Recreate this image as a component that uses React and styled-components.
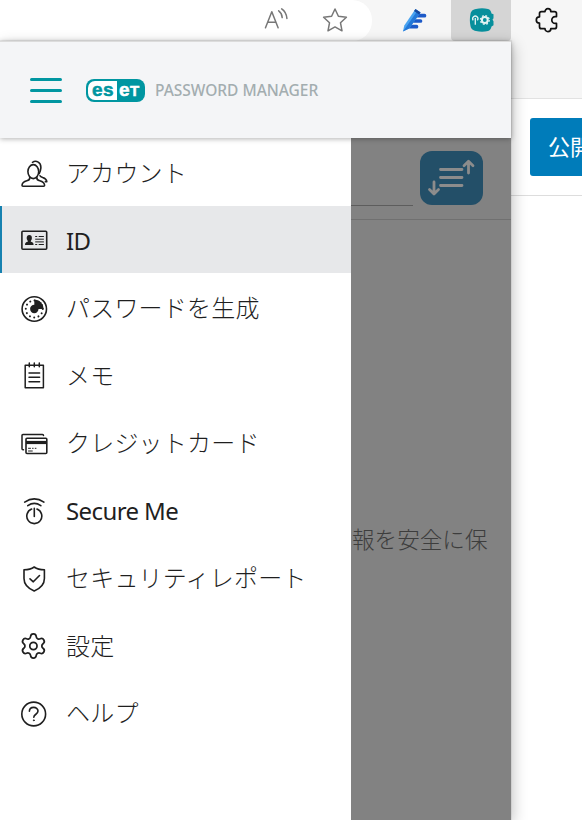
import React from 'react'
import styled, { createGlobalStyle } from 'styled-components'
import { Settings } from 'lucide-react'

const GlobalStyle = createGlobalStyle`
  * {
    box-sizing: border-box;
  }
  body {
    margin: 0;
    overflow: hidden;
    background: #fff;
    font-family: 'Noto Sans', 'Noto Sans CJK JP', sans-serif;
    color: #1f1f1f;
  }
  svg {
    display: block;
    flex-shrink: 0;
  }
`

const Screen = styled.div`
  position: relative;
  width: 582px;
  height: 820px;
  overflow: hidden;
  background: #fff;
`

const BrowserBar = styled.div`
  display: flex;
  align-items: flex-start;
  height: 99px;
  background: #f6f6f6;
  border-bottom: 1px solid #e2e2e2;
`

const AddressBar = styled.div`
  display: flex;
  align-items: center;
  justify-content: flex-end;
  gap: 33px;
  width: 372px;
  height: 41px;
  padding: 0 24px 2px 0;
  background: #fff;
  border-radius: 0 20px 20px 0;
`

const Extension = styled.div`
  display: flex;
  align-items: center;
  justify-content: center;
  width: ${({ $width }) => $width}px;
  height: 41px;
  padding-bottom: 2px;
  margin-left: ${({ $gap }) => $gap || 0}px;
  border-radius: 0 0 4px 4px;
  background: ${({ $active }) => ($active ? '#d5d5d5' : 'transparent')};
`

const EditorBar = styled.div`
  display: flex;
  justify-content: flex-end;
  height: 97px;
  padding-top: 19px;
  border-bottom: 1px solid #ddd;
`

const PublishButton = styled.button`
  width: 52px;
  height: 58px;
  padding: 0 0 4px 18px;
  border: 0;
  border-radius: 3px 0 0 3px;
  background: #007cba;
  color: #fff;
  font: 22px 'Noto Sans CJK JP', sans-serif;
  text-align: left;
  white-space: nowrap;
  overflow: hidden;
`

const Popup = styled.section`
  position: absolute;
  top: 41px;
  left: 0;
  bottom: 0;
  width: 511px;
  display: flex;
  flex-direction: column;
  background: #828282;
  box-shadow: 0 0 0 1px rgba(0, 0, 0, 0.06), 2px 4px 14px rgba(0, 0, 0, 0.24);
`

const Header = styled.header`
  display: flex;
  align-items: center;
  height: 97px;
  padding-left: 30px;
  background: #f4f5f7;
  border-top: 1px solid #dcdcdc;
  box-shadow: 0 1px 5px rgba(0, 0, 0, 0.3);
  z-index: 1;
`

const Burger = styled.div`
  display: flex;
  flex-direction: column;
  gap: 8px;
  margin-right: 24px;
  span {
    width: 32px;
    height: 3px;
    border-radius: 2px;
    background: #0096a1;
  }
`

const Logo = styled.div`
  display: flex;
  width: 59px;
  height: 23px;
  padding: 2px;
  margin-right: 10px;
  border-radius: 8px;
  background: #0096a1;
  font: bold 19px/18px 'Liberation Sans', sans-serif;
  -webkit-text-stroke: 0.5px;
`

const LogoHalf = styled.span`
  width: ${({ $light }) => ($light ? 29 : 26)}px;
  height: 19px;
  padding-left: ${({ $light }) => ($light ? 4 : 2)}px;
  border-radius: ${({ $light }) => ($light ? '7px 0 0 7px' : '0')};
  background: ${({ $light }) => ($light ? '#fff' : 'transparent')};
  color: ${({ $light }) => ($light ? '#0096a1' : '#fff')};
  letter-spacing: 0.5px;
  small {
    font-size: 15px;
  }
`

const ProductName = styled.span`
  color: #a3adb0;
  font-size: 15.5px;
  font-weight: 500;
  letter-spacing: -0.02px;
  white-space: nowrap;
`

const Body = styled.div`
  display: flex;
  flex: 1;
  min-height: 0;
`

const Menu = styled.nav`
  width: 351px;
  background: #fff;
`

const MenuItem = styled.div`
  display: flex;
  align-items: center;
  height: 67.5px;
  padding-left: 18px;
  border-left: 2px solid ${({ $active }) => ($active ? '#1681b0' : 'transparent')};
  background: ${({ $active }) => ($active ? '#e7e8ea' : '#fff')};
  font-size: 24px;
  font-weight: ${({ $latin }) => ($latin ? 400 : 300)};
  letter-spacing: ${({ $latin }) => ($latin ? '-0.6px' : '0.2px')};
  white-space: nowrap;
  svg {
    margin: 4px 18px 0 0;
  }
  svg svg {
    margin: 0;
  }
  span {
    padding-top: ${({ $latin }) => ($latin ? 2 : 0)}px;
  }
`

const Dimmed = styled.div`
  flex: 1;
  overflow: hidden;
`

const SearchRow = styled.div`
  display: flex;
  align-items: flex-start;
  height: 82px;
  padding-top: 13px;
  border-bottom: 1px solid #707070;
`

const SearchField = styled.div`
  width: 62px;
  height: 55px;
  margin-right: 7px;
  border-bottom: 1px solid #5d5d5d;
`

const SortButton = styled.div`
  display: flex;
  width: 63px;
  height: 54px;
  border-radius: 12px;
  background: #234f68;
`

const Hint = styled.p`
  margin: 303px 0 0 1px;
  color: #3d3d3d;
  font-size: 22.6px;
  font-weight: 300;
  line-height: 34px;
  white-space: nowrap;
`

const Icon = ({ children }) => (
  <svg width="28" height="28" viewBox="0 0 28 28" fill="none" stroke="#1f1f1f" strokeWidth="1.6" strokeLinecap="round" strokeLinejoin="round">
    {children}
  </svg>
)

const AccountIcon = () => (
  <Icon>
    <ellipse cx="13.3" cy="11.6" rx="5.4" ry="7" />
    <path d="M9.8 17.5c.2 2.200-.8 2.800-3 3.300-3 .8-4.600 2-4.800 4.400 0 .7.3 1 1 1h20.600c.7 0 1-.3 1-1-.2-2.400-1.800-3.600-4.800-4.400-2.200-.5-3.200-1.100-3-3.300" />
    <path d="M12.500 2.300c3.500-2.400 9 0 8.300 6.100-.2 2.200-.8 3.600-1.600 5.200M20 15.700c.2 1 1.200 1.200 2.800 1.800 2.300.8 3.800 2.100 4 4.300h-1.500" />
  </Icon>
)

const IdIcon = () => (
  <Icon>
    <rect x="1.9" y="4.2" width="24.8" height="18" rx="1" />
    <g fill="#1f1f1f" stroke="none">
      <ellipse cx="9.3" cy="11" rx="2.600" ry="3.100" />
      <path d="M7.800 12.800h3v2c1.800.3 2.800 1 2.800 3.300H5c0-2.300 1-3 2.800-3.300z" />
    </g>
    <path d="M15.200 9.500h2m1.500 0h5.200M15.200 12.200h8.700M15.200 14.900h8.700M15.200 17.500h2m1.500 0h5.200" strokeWidth="1" strokeLinecap="butt" />
  </Icon>
)

const GeneratorIcon = () => (
  <Icon>
    <circle cx="14.300" cy="14" r="12.200" />
    <circle cx="14.300" cy="14" r="8.500" strokeWidth="2" strokeDasharray="0.010 4.440" />
    <g fill="#1f1f1f" stroke="none">
      <circle cx="14.300" cy="14" r="4.200" />
      <path d="M14.300 4.600a9.400 9.400 0 0 1 9.400 9.400h-9.400z" />
    </g>
  </Icon>
)

const MemoIcon = () => (
  <Icon>
    <path d="M5.200 3.200h18.200v22.500H5.200zM9.300 1v3.800M14.300 1v3.800M19.300 1v3.800M9 11h10.600M9 15.300h10.600M9 19.800h10.600" strokeWidth="1.500" />
  </Icon>
)

const CardIcon = () => (
  <Icon>
    <path d="M3.500 19.700H3a1 1 0 0 1-1-1V5.500a1 1 0 0 1 1-1h19.500a1 1 0 0 1 1 1" strokeWidth="1.500" />
    <rect x="6" y="8.300" width="20.800" height="15.200" rx="1" />
    <path d="M6 12.500h20.800" strokeWidth="3.200" strokeLinecap="butt" />
    <path d="M8.500 18.300h2m2 0h.7m2 0h.8M8.500 21h3.800" strokeWidth="1" />
  </Icon>
)

const SecureIcon = () => (
  <Icon>
    <path d="M11.600 12.100a7.500 7.500 0 1 0 5.400 0M14.300 11.300v8.200M4.700 5.100c6-4 13.200-4 19.200 0M7.800 8.700c4-2.800 9-2.800 13 0" />
  </Icon>
)

const ReportIcon = () => (
  <Icon>
    <path d="M14.200 2c-2.800 2-6.300 2.800-10.200 2.800v8.700c0 6.200 4.300 10 10.200 12.500 5.900-2.500 10.200-6.300 10.200-12.500V4.800c-3.900 0-7.400-.8-10.200-2.800zM10 13.800l3.300 3 6.200-6.300" />
  </Icon>
)

const SettingsIcon = () => (
  <Icon>
    <Settings x="-1.100" y="-0.500" size={29} strokeWidth={1.450} color="#1f1f1f" />
  </Icon>
)

const HelpIcon = () => (
  <Icon>
    <circle cx="13.700" cy="14" r="11.900" />
    <path d="M9.400 11.300c0-5.300 8.600-5.200 8.600-.2 0 3.300-4.200 3-4.200 6.200" />
    <circle cx="13.800" cy="20.300" r=".5" fill="#1f1f1f" strokeWidth=".8" />
  </Icon>
)

const ReadAloudIcon = () => (
  <svg width="26" height="24" viewBox="0 0 26 24" fill="none" stroke="#777" strokeWidth="1.500" strokeLinecap="round" strokeLinejoin="round">
    <path d="M2.500 19.800L8.800 3.800l6.300 16M4.800 14.300h8M15.700 2.800c2 1.400 3.300 3.700 3.500 6.800M18.700.900c3 2 4.800 5 5.200 9.500" />
  </svg>
)

const StarIcon = () => (
  <svg width="26" height="26" viewBox="0 0 26 26" fill="none" stroke="#777" strokeWidth="1.500" strokeLinejoin="round">
    <path d="M13 2l3.400 7.300 8 1-5.900 5.500 1.500 8-7-3.900-7 3.900 1.500-8-5.900-5.500 8-1z" />
  </svg>
)

const PenIcon = () => (
  <svg width="26" height="24" viewBox="0 0 26 24">
    <path d="M14 7.700h8.500M12 13h6.500M8 18.700h6.500" stroke="#1d5ac8" strokeWidth="3.700" strokeLinecap="round" />
    <path d="M2.300 17.500L13.500 1l5 3.400L7.200 20.500.9 23.400z" fill="#49a3f0" />
    <path d="M4.200 18.900L15.500 2.400l3 2L7.200 20.500.9 23.400z" fill="#2478d8" />
    <path d="M13.500 1l5 3.400-1.500 2L12 3z" fill="#16479d" />
  </svg>
)

const VaultIcon = () => (
  <svg width="25" height="24" viewBox="0 0 25 24">
    <path d="M7 1c4-.9 8-.9 12 0 2 .5 3 2 3.500 4.500l2 .8v4l-1 1.500 1 1.500v4l-2 1.200c-.6 2.500-1.600 4-3.500 4.500-4 .9-8 .9-12 0-3.500-.8-5-2-5.600-5.500-.7-3.700-.7-7.300 0-11C2 3 3.500 1.700 7 1z" fill="#078f9c" />
    <path d="M4.200 12.300a2.600 2.600 0 1 1 4.200 0M6.300 10v6.800" fill="none" stroke="#e4f3f3" strokeWidth="1.300" />
    <circle cx="15.800" cy="12" r="2.900" fill="none" stroke="#e4f3f3" strokeWidth="2" />
    <circle cx="15.800" cy="12" r="4.400" fill="none" stroke="#e4f3f3" strokeWidth="1.300" strokeDasharray="1.800 1.656" />
  </svg>
)

const PuzzleIcon = () => (
  <svg width="24" height="26" viewBox="0 0 24 26" fill="none" stroke="#111" strokeWidth="1.700" strokeLinejoin="round">
    <path d="M6.500 4.600h3.500a2.900 2.900 0 0 1 5.800 0h3.700q2 0 2 2v3h-1.300a3.400 3.400 0 0 0 0 6.800h1.300v3.300q0 2-2 2h-3.700a2.900 2.900 0 0 1-5.800 0H6.500q-2 0-2-2v-3.500a3.200 3.200 0 0 1 0-6.400V6.600q0-2 2-2z" />
  </svg>
)

const SortIcon = () => (
  <svg width="63" height="54" viewBox="0 0 63 54" fill="none" stroke="#8c8c8c" strokeWidth="2.800" strokeLinecap="round" strokeLinejoin="round">
    <path d="M20.500 18.500h21.500M20.500 26.500h21.500M20.500 34.500h21.500M48.500 22V10.500M44 14.800l4.500-4.500 4.500 4.500M14 31v11.500M9.500 38.500l4.500 4.500 4.500-4.500" />
  </svg>
)

const items = [
  { label: 'アカウント', icon: AccountIcon },
  { label: 'ID', icon: IdIcon, active: true, latin: true },
  { label: 'パスワードを生成', icon: GeneratorIcon },
  { label: 'メモ', icon: MemoIcon },
  { label: 'クレジットカード', icon: CardIcon },
  { label: 'Secure Me', icon: SecureIcon, latin: true },
  { label: 'セキュリティレポート', icon: ReportIcon },
  { label: '設定', icon: SettingsIcon },
  { label: 'ヘルプ', icon: HelpIcon },
]

const App = () => {
  return (
    <Screen>
      <GlobalStyle />
      <BrowserBar>
        <AddressBar>
          <ReadAloudIcon />
          <StarIcon />
        </AddressBar>
        <Extension $width={60} $gap={13}><PenIcon /></Extension>
        <Extension $width={60} $gap={6} $active><VaultIcon /></Extension>
        <Extension $width={60} $gap={6}><PuzzleIcon /></Extension>
      </BrowserBar>
      <EditorBar>
        <PublishButton>公開</PublishButton>
      </EditorBar>
      <Popup>
        <Header>
          <Burger>
            <span />
            <span />
            <span />
          </Burger>
          <Logo>
            <LogoHalf $light>es</LogoHalf>
            <LogoHalf>e<small>T</small></LogoHalf>
          </Logo>
          <ProductName>PASSWORD MANAGER</ProductName>
        </Header>
        <Body>
          <Menu>
            {items.map(({ label, icon: ItemIcon, active, latin }) => (
              <MenuItem key={label} $active={active} $latin={latin}>
                <ItemIcon />
                <span>{label}</span>
              </MenuItem>
            ))}
          </Menu>
          <Dimmed>
            <SearchRow>
              <SearchField />
              <SortButton><SortIcon /></SortButton>
            </SearchRow>
            <Hint>報を安全に保</Hint>
          </Dimmed>
        </Body>
      </Popup>
    </Screen>
  )
}

export default App
